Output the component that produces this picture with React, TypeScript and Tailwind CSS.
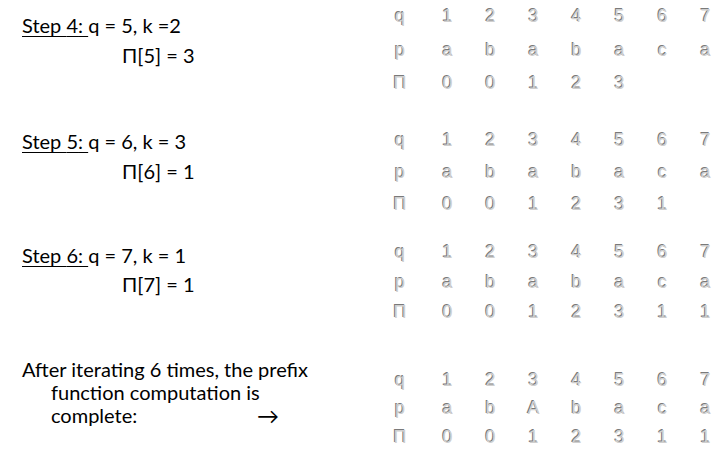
import React from "react";

const header = ["q", "1", "2", "3", "4", "5", "6", "7"];

type Row = string[];

function Table({ rows, className }: { rows: Row[]; className: string }) {
  return (
    <div className={className}>
      {rows.map((row, i) => (
        <div key={i} className="grid grid-cols-[48px_repeat(7,43px)]">
          {row.map((cell, j) => (
            <div key={j} className={j === 0 ? "text-center pr-1" : "text-center"}>
              {cell}
            </div>
          ))}
        </div>
      ))}
    </div>
  );
}

function Step({ n, head, pi, className }: { n: number; head: string; pi: string; className: string }) {
  return (
    <div className={className}>
      <div className="whitespace-pre">
        <span className="underline decoration-1 underline-offset-[3px]">Step {n}: </span>
        {head}
      </div>
      <div className="pl-[100px]">{pi}</div>
    </div>
  );
}

export default function App() {
  const p = ["p", "a", "b", "a", "b", "a", "c", "a"];
  return (
    <div className="w-[718px] h-[460px] bg-white flex overflow-hidden">
      <div className="w-[378px] shrink-0 pl-[22px] font-['Lato',sans-serif] text-[20px] text-black">
        <Step n={4} head="q = 5, k =2" pi="Π[5] = 3" className="mt-[11px] leading-[29.5px]" />
        <Step n={5} head="q = 6, k = 3" pi="Π[6] = 1" className="mt-[57px] leading-[29.5px]" />
        <Step n={6} head="q = 7, k = 1" pi="Π[7] = 1" className="mt-[55px] leading-[28.5px]" />
        <div className="mt-[60px] leading-[23px]">
          <div>After iterating 6 times, the prefix</div>
          <div className="pl-[29px]">function computation is</div>
          <div className="pl-[29px] flex">
            <span className="w-[206px]">complete:</span>
            <span className="text-[22px]">→</span>
          </div>
        </div>
      </div>
      <div className="shrink-0 font-['Liberation_Sans',Arial,sans-serif] text-[18px] text-[#cfcfcf] [text-shadow:-1px_-1px_0_#7a7a7a]">
        <Table
          className="leading-[33.5px]"
          rows={[header, p, ["Π", "0", "0", "1", "2", "3", "", ""]]}
        />
        <Table
          className="mt-[23px] leading-[32px]"
          rows={[header, p, ["Π", "0", "0", "1", "2", "3", "1", ""]]}
        />
        <Table
          className="mt-[17px] leading-[30px]"
          rows={[header, p, ["Π", "0", "0", "1", "2", "3", "1", "1"]]}
        />
        <Table
          className="mt-[39px] leading-[28.5px]"
          rows={[header, ["p", "a", "b", "A", "b", "a", "c", "a"], ["Π", "0", "0", "1", "2", "3", "1", "1"]]}
        />
      </div>
    </div>
  );
}
